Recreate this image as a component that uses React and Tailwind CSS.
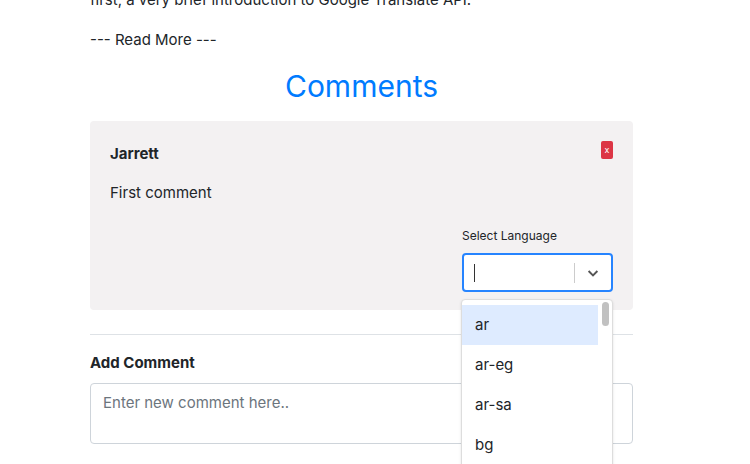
const options = ['ar', 'ar-eg', 'ar-sa', 'bg'];

export default function App() {
  return (
    <div className="w-[750px] h-[464px] overflow-hidden bg-white text-[#212529]" style={{ fontFamily: 'Inter, "Noto Sans", sans-serif' }}>
      <div className="ml-[90px] w-[543px] -mt-[11px]">
        <p className="text-[15px] leading-[22px]">first, a very brief introduction to Google Translate API.</p>
        <p className="text-[15px] leading-[22px] mt-[18px]">--- Read More ---</p>
        <h2 className="text-center text-[30px] leading-[36px] text-[#007bff] mt-[17px]">Comments</h2>
        <div className="mt-[17px] bg-[#f3f1f2] rounded-[4px] h-[189px] px-[20px] pt-[22px] relative">
          <div className="flex justify-between items-start">
            <div className="font-bold text-[15px] leading-[22px]">Jarrett</div>
            <div className="mt-[-2px] w-[12px] h-[18px] bg-[#dc3545] rounded-[2px] text-white text-[9px] flex items-center justify-center">x</div>
          </div>
          <div className="text-[15px] leading-[22px] mt-[17px]">First comment</div>
          <div className="flex justify-end mt-[24px]">
            <div className="w-[151px] relative">
              <div className="text-[12px] leading-[16px]">Select Language</div>
              <div className="mt-[9px] h-[39px] border-2 border-[#2684ff] rounded-[4px] bg-white flex items-center">
                <div className="flex-1 pl-[10px]"><div className="w-px h-[18px] bg-[#333]" /></div>
                <div className="w-px h-[20px] bg-[#ccc]" />
                <div className="w-[36px] flex justify-center">
                  <svg width="16" height="16" viewBox="0 0 20 20"><path d="M4.5 7.5l5.5 5.5 5.5-5.5" stroke="#555" strokeWidth="2.4" fill="none" /></svg>
                </div>
              </div>
              <div className="absolute left-[-1px] top-[71px] w-[152px] h-[200px] bg-white rounded-[4px] border border-[#ddd] shadow z-10 flex">
                <div className="flex-1 pt-[5px]">
                  {options.map((o, i) => (
                    <div key={o} className={`h-[40px] flex items-center pl-[13px] text-[15px] ${i === 0 ? 'bg-[#deebff]' : ''}`}>{o}</div>
                  ))}
                </div>
                <div className="w-[14px] pt-[2px] flex justify-center">
                  <div className="w-[7px] h-[24px] rounded-full bg-[#c1c1c1]" />
                </div>
              </div>
            </div>
          </div>
        </div>
        <div className="border-t border-[#dee2e6] mt-[24px]" />
        <div className="font-bold text-[15px] leading-[22px] mt-[17px]">Add Comment</div>
        <div className="mt-[9px] h-[61px] border border-[#ced4da] rounded-[4px] px-[12px] py-[8px] text-[15px] text-[#6c757d]">Enter new comment here..</div>
      </div>
    </div>
  );
}
